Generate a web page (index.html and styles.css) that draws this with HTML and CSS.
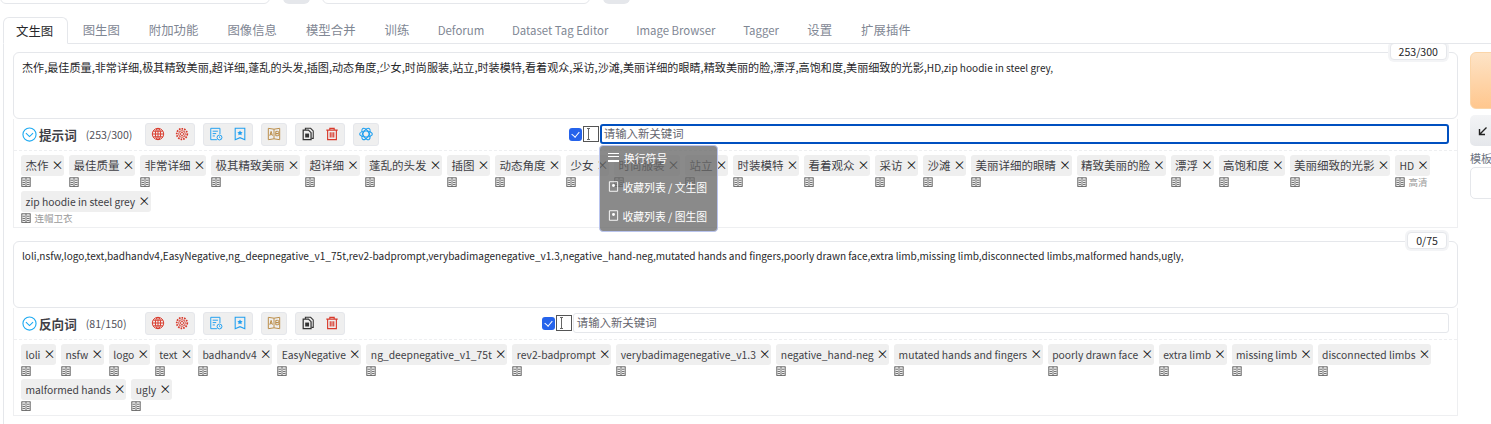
FILE: index.html
```html
<!DOCTYPE html>
<html lang="en">
<head>
  <meta charset="UTF-8" />
  <title>txt2img</title>
  <link rel="stylesheet" href="styles.css">
</head>
<body>
  <svg class="sprites" width="0" height="0">
    <symbol id="i-chevron" viewBox="0 0 16 16"><circle cx="8" cy="8" r="7" fill="none" stroke="currentColor" stroke-width="1.2"/><path d="M4.2 6.5 8 10.2l3.8-3.7" fill="none" stroke="currentColor" stroke-width="1.2"/></symbol>
    <symbol id="i-globe" viewBox="0 0 16 16"><g fill="none" stroke="currentColor" stroke-width="1.1"><circle cx="8" cy="8" r="6.5"/><ellipse cx="8" cy="8" rx="3" ry="6.5"/><path d="M8 1.5v13M1.5 8h13M2.5 4.8h11M2.5 11.2h11"/></g></symbol>
    <symbol id="i-gear" viewBox="0 0 16 16"><g fill="none" stroke="currentColor"><circle cx="8" cy="8" r="6" stroke-width="2" stroke-dasharray="1.8 1.2"/><circle cx="8" cy="8" r="3.8" stroke-width="1"/><circle cx="8" cy="8" r="1.8" stroke-width="1"/></g></symbol>
    <symbol id="i-doc" viewBox="0 0 16 16"><g fill="none" stroke="currentColor" stroke-width="1.1"><path d="M9 14.5H2V1.5h10.5V8"/><path d="M4.2 4.8h6M4.2 7.5h4M4.2 10.2h2.500"/><circle cx="12" cy="12" r="2.800"/><path d="M12 10.800V12l1 .6"/></g></symbol>
    <symbol id="i-mark" viewBox="0 0 16 16"><path d="M2.500 1.500h11v13L8 12.200l-5.500 2.300z" fill="none" stroke="currentColor" stroke-width="1.200"/><path d="m8 4 1 1.800 2 .3-1.400 1.400.3 2L8 8.600l-1.900.9.300-2L5 6.100l2-.3z" fill="currentColor"/></symbol>
    <symbol id="i-book" viewBox="0 0 16 16"><g fill="none" stroke="currentColor" stroke-width="1.100"><path d="M8 2.500 1.500 1.500v13l6.500-1 6.500 1v-13zM8 2.500v11"/><path d="m3.200 10 1.500-5 1.500 5M3.800 8.400h1.800M10 5h2.200a1.200 1.200 0 0 1 0 2.500H10zM10 7.500h2.500a1.200 1.200 0 0 1 0 2.500H10z"/></g></symbol>
    <symbol id="i-copy" viewBox="0 0 16 16"><path d="M5 3.500V1.500h6l3 3v8.500h-2" fill="none" stroke="currentColor" stroke-width="1.200"/><path d="M2.500 3.500h6l3 3v8h-9z" fill="none" stroke="currentColor" stroke-width="1.400"/><rect x="4.800" y="7.500" width="4.400" height="4.500" fill="currentColor"/></symbol>
    <symbol id="i-trash" viewBox="0 0 16 16"><g fill="none" stroke="currentColor" stroke-width="1.300"><path d="M1.500 3.500h13M5.500 3.500V1.500h5v2M3 3.500v11h10v-11M6 6v6M8 6v6M10 6v6"/></g></symbol>
    <symbol id="i-knot" viewBox="0 0 16 16"><g fill="none" stroke="currentColor" stroke-width="1.300"><ellipse cx="8" cy="8" rx="7.200" ry="3.400"/><ellipse cx="8" cy="8" rx="7.200" ry="3.400" transform="rotate(60 8 8)"/><ellipse cx="8" cy="8" rx="7.200" ry="3.400" transform="rotate(120 8 8)"/></g></symbol>
    <symbol id="i-sub" viewBox="0 0 10 10"><g fill="none" stroke="currentColor" stroke-width=".9"><path d="M.5.800h9M.5 9.400h9M.8.800v8.600M9.200.800v8.600M5 .8v8.600M1.500 3.200h2.500M6 3.200h2.500M1.500 5.400h2.500M6 5.400h2.500M1.500 7.400h2.500M6 7.400h2.500"/></g></symbol>
    <symbol id="i-star-box" viewBox="0 0 12 12"><path d="M1.500.8h9v10.400h-9z" fill="none" stroke="currentColor"/><circle cx="6" cy="5" r="1.600" fill="currentColor"/></symbol>
  </svg>

  <div class="top-stub">
    <span class="stub-input stub-a"></span><span class="stub-btn"></span>
    <span class="stub-input stub-b"></span><span class="stub-btn"></span>
  </div>

  <div class="tabs">
    <span class="tab active">文生图</span>
    <span class="tab">图生图</span>
    <span class="tab">附加功能</span>
    <span class="tab">图像信息</span>
    <span class="tab">模型合并</span>
    <span class="tab">训练</span>
    <span class="tab latin">Deforum</span>
    <span class="tab latin">Dataset Tag Editor</span>
    <span class="tab latin">Image Browser</span>
    <span class="tab latin">Tagger</span>
    <span class="tab">设置</span>
    <span class="tab">扩展插件</span>
  </div>

  <div class="tab-panel">
    <div class="main">
      <div class="prompt-box">
        <span class="counter">253/300</span>
        <div class="prompt-text">杰作,最佳质量,非常详细,极其精致美丽,超详细,蓬乱的头发,插图,动态角度,少女,时尚服装,站立,时装模特,看着观众,采访,沙滩,美丽详细的眼睛,精致美丽的脸,漂浮,高饱和度,美丽细致的光影,<span class="latin-text">HD,zip hoodie in steel grey,</span></div>
      </div>
      <div class="tools">
        <div class="tool-row">
          <svg class="title-icon"><use href="#i-chevron"/></svg>
          <span class="title">提示词</span>
          <span class="count">(253/300)</span>
          <div class="group"><svg class="red"><use href="#i-globe"/></svg><svg class="red"><use href="#i-gear"/></svg></div>
          <div class="group"><svg class="blue"><use href="#i-doc"/></svg><svg class="blue"><use href="#i-mark"/></svg></div>
          <div class="group"><svg class="tan"><use href="#i-book"/></svg></div>
          <div class="group"><svg class="dark"><use href="#i-copy"/></svg><svg class="red"><use href="#i-trash"/></svg></div>
          <div class="group"><svg class="blue"><use href="#i-knot"/></svg></div>
          <div class="new-tag first">
            <span class="check"></span>
            <span class="cursor-box"></span>
            <span class="new-input focused">请输入新关键词</span>
          </div>
        </div>
        <div class="chips">
          <div class="item"><span class="chip">杰作<i>×</i></span><svg class="sub"><use href="#i-sub"/></svg></div>
          <div class="item"><span class="chip">最佳质量<i>×</i></span><svg class="sub"><use href="#i-sub"/></svg></div>
          <div class="item"><span class="chip">非常详细<i>×</i></span><svg class="sub"><use href="#i-sub"/></svg></div>
          <div class="item"><span class="chip">极其精致美丽<i>×</i></span><svg class="sub"><use href="#i-sub"/></svg></div>
          <div class="item"><span class="chip">超详细<i>×</i></span><svg class="sub"><use href="#i-sub"/></svg></div>
          <div class="item"><span class="chip">蓬乱的头发<i>×</i></span><svg class="sub"><use href="#i-sub"/></svg></div>
          <div class="item"><span class="chip">插图<i>×</i></span><svg class="sub"><use href="#i-sub"/></svg></div>
          <div class="item"><span class="chip">动态角度<i>×</i></span><svg class="sub"><use href="#i-sub"/></svg></div>
          <div class="item"><span class="chip">少女<i>×</i></span><svg class="sub"><use href="#i-sub"/></svg></div>
          <div class="item"><span class="chip">时尚服装<i>×</i></span><svg class="sub"><use href="#i-sub"/></svg></div>
          <div class="item"><span class="chip">站立<i>×</i></span><svg class="sub"><use href="#i-sub"/></svg></div>
          <div class="item"><span class="chip">时装模特<i>×</i></span><svg class="sub"><use href="#i-sub"/></svg></div>
          <div class="item"><span class="chip">看着观众<i>×</i></span><svg class="sub"><use href="#i-sub"/></svg></div>
          <div class="item"><span class="chip">采访<i>×</i></span><svg class="sub"><use href="#i-sub"/></svg></div>
          <div class="item"><span class="chip">沙滩<i>×</i></span><svg class="sub"><use href="#i-sub"/></svg></div>
          <div class="item"><span class="chip">美丽详细的眼睛<i>×</i></span><svg class="sub"><use href="#i-sub"/></svg></div>
          <div class="item"><span class="chip">精致美丽的脸<i>×</i></span><svg class="sub"><use href="#i-sub"/></svg></div>
          <div class="item"><span class="chip">漂浮<i>×</i></span><svg class="sub"><use href="#i-sub"/></svg></div>
          <div class="item"><span class="chip">高饱和度<i>×</i></span><svg class="sub"><use href="#i-sub"/></svg></div>
          <div class="item"><span class="chip">美丽细致的光影<i>×</i></span><svg class="sub"><use href="#i-sub"/></svg></div>
          <div class="item"><span class="chip latin">HD<i>×</i></span><div class="sub-row"><svg class="sub"><use href="#i-sub"/></svg><span class="trans">高清</span></div></div>
          <div class="item"><span class="chip latin">zip hoodie in steel grey<i>×</i></span><div class="sub-row"><svg class="sub"><use href="#i-sub"/></svg><span class="trans">连帽卫衣</span></div></div>
        </div>
      </div>

      <div class="prompt-box second">
        <span class="counter">0/75</span>
        <div class="prompt-text latin-text">loli,nsfw,logo,text,badhandv4,EasyNegative,ng_deepnegative_v1_75t,rev2-badprompt,verybadimagenegative_v1.3,negative_hand-neg,mutated hands and fingers,poorly drawn face,extra limb,missing limb,disconnected limbs,malformed hands,ugly,</div>
      </div>
      <div class="tools">
        <div class="tool-row">
          <svg class="title-icon"><use href="#i-chevron"/></svg>
          <span class="title">反向词</span>
          <span class="count">(81/150)</span>
          <div class="group"><svg class="red"><use href="#i-globe"/></svg><svg class="red"><use href="#i-gear"/></svg></div>
          <div class="group"><svg class="blue"><use href="#i-doc"/></svg><svg class="blue"><use href="#i-mark"/></svg></div>
          <div class="group"><svg class="tan"><use href="#i-book"/></svg></div>
          <div class="group"><svg class="dark"><use href="#i-copy"/></svg><svg class="red"><use href="#i-trash"/></svg></div>
          <div class="new-tag second-tag">
            <span class="check"></span>
            <span class="cursor-box"></span>
            <span class="new-input">请输入新关键词</span>
          </div>
        </div>
        <div class="chips latin-chips">
          <div class="item"><span class="chip">loli<i>×</i></span><svg class="sub"><use href="#i-sub"/></svg></div>
          <div class="item"><span class="chip">nsfw<i>×</i></span><svg class="sub"><use href="#i-sub"/></svg></div>
          <div class="item"><span class="chip">logo<i>×</i></span><svg class="sub"><use href="#i-sub"/></svg></div>
          <div class="item"><span class="chip">text<i>×</i></span><svg class="sub"><use href="#i-sub"/></svg></div>
          <div class="item"><span class="chip">badhandv4<i>×</i></span><svg class="sub"><use href="#i-sub"/></svg></div>
          <div class="item"><span class="chip">EasyNegative<i>×</i></span><svg class="sub"><use href="#i-sub"/></svg></div>
          <div class="item"><span class="chip">ng_deepnegative_v1_75t<i>×</i></span><svg class="sub"><use href="#i-sub"/></svg></div>
          <div class="item"><span class="chip">rev2-badprompt<i>×</i></span><svg class="sub"><use href="#i-sub"/></svg></div>
          <div class="item"><span class="chip">verybadimagenegative_v1.3<i>×</i></span><svg class="sub"><use href="#i-sub"/></svg></div>
          <div class="item"><span class="chip">negative_hand-neg<i>×</i></span><svg class="sub"><use href="#i-sub"/></svg></div>
          <div class="item"><span class="chip">mutated hands and fingers<i>×</i></span><svg class="sub"><use href="#i-sub"/></svg></div>
          <div class="item"><span class="chip">poorly drawn face<i>×</i></span><svg class="sub"><use href="#i-sub"/></svg></div>
          <div class="item"><span class="chip">extra limb<i>×</i></span><svg class="sub"><use href="#i-sub"/></svg></div>
          <div class="item"><span class="chip">missing limb<i>×</i></span><svg class="sub"><use href="#i-sub"/></svg></div>
          <div class="item"><span class="chip">disconnected limbs<i>×</i></span><svg class="sub"><use href="#i-sub"/></svg></div>
          <div class="item"><span class="chip">malformed hands<i>×</i></span><svg class="sub"><use href="#i-sub"/></svg></div>
          <div class="item"><span class="chip">ugly<i>×</i></span><svg class="sub"><use href="#i-sub"/></svg></div>
        </div>
      </div>
    </div>

    <div class="side">
      <div class="generate"></div>
      <div class="arrow-btn">
        <svg width="12" height="12" viewBox="0 0 12 12"><path d="M9.500 2.500 2.500 9.500M2.500 4v5.500H8" fill="none" stroke="#222" stroke-width="1.400"/></svg>
      </div>
      <div class="side-label">模板</div>
      <div class="side-input"></div>
    </div>

    <div class="menu">
      <div class="menu-item wrap"><span class="lines"></span>换行符号</div>
      <div class="menu-item"><svg><use href="#i-star-box"/></svg>收藏列表 / 文生图</div>
      <div class="menu-item"><svg><use href="#i-star-box"/></svg>收藏列表 / 图生图</div>
    </div>
  </div>
</body>
</html>
```

FILE: styles.css
```css
* {
  box-sizing: border-box;
}
html, body {
  height: 100%;
}
body {
  margin: 0;
  overflow: hidden;
  background-color: #fff;
  color: #27272a;
  font-family: "Noto Sans CJK SC", "Noto Sans", sans-serif;
  font-size: 11px;
}
.sprites {
  position: absolute;
}
.top-stub {
  display: flex;
  height: 4px;
  overflow: hidden;
}
.stub-input {
  display: block;
  height: 14px;
  margin-top: -10px;
  border: 1px solid #e5e7eb;
  border-radius: 6px;
}
.stub-a {
  width: 270px;
}
.stub-b {
  width: 268px;
}
.stub-btn {
  display: block;
  width: 27px;
  height: 14px;
  margin: -10px 12px 0 13px;
  border-radius: 6px;
  background-color: #e5e7eb;
}
.tabs {
  display: flex;
  height: 40px;
  margin-left: 3px;
  padding-top: 13px;
  border-bottom: 1px solid #e5e7eb;
}
.tab {
  height: 27px;
  padding: 0 14.500px;
  color: #7f8794;
  font-size: 12.400px;
  line-height: 26px;
  white-space: nowrap;
}
.tab.latin {
  padding: 0 13.900px;
  font-size: 11.400px;
}
.tab.active {
  padding: 0 14px 0 12px;
  border: 1px solid #e5e7eb;
  border-bottom: 1px solid #fff;
  border-radius: 6px 6px 0 0;
  background-color: #fff;
  color: #27272a;
}
.tab-panel {
  position: relative;
  display: flex;
  height: 380px;
  margin-left: 3px;
  padding: 8px 0 0 9px;
  border-left: 1px solid #e5e7eb;
  overflow: hidden;
}
.main {
  flex: none;
  width: 1445px;
}
.prompt-box {
  position: relative;
  height: 66.500px;
  border: 1px solid #e5e7eb;
  border-radius: 6px;
  background-color: #fff;
}
.prompt-box.second {
  margin-top: 13px;
}
.prompt-text {
  padding: 6px 8px;
  font-size: 11.100px;
  line-height: 16px;
  white-space: nowrap;
}
.latin-text {
  font-size: 10.050px;
}
.counter {
  position: absolute;
  top: -10px;
  right: 10px;
  padding: 0 8px;
  border: 1px solid #e5e7eb;
  border-radius: 4px;
  background-color: #fff;
  box-shadow: 0 0 0 2px #f3f4f6;
  font-size: 10.600px;
  line-height: 15px;
}
.tools {
  border: 1px solid #eeeff1;
  border-top: 0;
}
.tool-row {
  display: flex;
  align-items: center;
  height: 32px;
  padding-left: 8px;
  border-bottom: 1px dashed #eeeff1;
}
.title-icon {
  flex: none;
  width: 15px;
  height: 15px;
  color: #1eaaf1;
}
.title {
  margin-left: 2px;
  font-size: 12.600px;
  font-weight: 700;
  color: #3f3f46;
}
.count {
  width: 59px;
  margin-left: 9px;
  font-size: 10.600px;
  color: #52525b;
}
.group {
  display: flex;
  align-items: center;
  gap: 10px;
  height: 23px;
  margin-right: 8px;
  padding: 0 5px;
  border: 1px solid #e5e7eb;
  border-radius: 3px;
  background-color: #efefef;
}
.group svg {
  width: 14px;
  height: 14px;
}
.red { color: #d8392b; }
.blue { color: #1e9ff0; }
.tan { color: #b98a45; }
.dark { color: #333; }
.new-tag {
  display: flex;
  align-items: center;
  flex: 1;
  height: 20px;
  margin-right: 8px;
}
.new-tag.first {
  margin-left: 182px;
}
.new-tag.second-tag {
  margin-left: 189px;
}
.check {
  position: relative;
  flex: none;
  width: 13px;
  height: 13px;
  border-radius: 3px;
  background-color: #2563eb;
}
.check::after {
  content: "";
  position: absolute;
  left: 4px;
  top: 2.500px;
  width: 4px;
  height: 6px;
  border: solid #fff;
  border-width: 0 1.500px 1.500px 0;
  transform: rotate(40deg);
}
.cursor-box {
  flex: none;
  width: 16px;
  height: 16px;
  margin-left: 1px;
  border: 1px solid #555;
  background:
    linear-gradient(#666, #666) 4px 1px / 1px 12px no-repeat,
    linear-gradient(#666, #666) 3px 1px / 3px 1px no-repeat,
    linear-gradient(#666, #666) 3px 12px / 3px 1px no-repeat;
}
.new-input {
  flex: 1;
  height: 20px;
  margin-left: 1px;
  padding-left: 3px;
  border: 1px solid #e5e7eb;
  border-radius: 3px;
  color: #66666e;
  font-size: 11.400px;
  line-height: 17px;
}
.new-input.focused {
  padding-left: 2px;
  border: 2px solid #0050c0;
  line-height: 15px;
}
.chips {
  display: flex;
  flex-wrap: wrap;
  gap: 3px 5px;
  padding: 4.500px 8px 3px 7px;
}
.latin-chips {
  row-gap: 2px;
}
.item {
  display: flex;
  flex-direction: column;
  align-items: flex-start;
}
.chip {
  display: flex;
  align-items: center;
  height: 21px;
  padding: 0 4.500px 1px;
  border-radius: 3px;
  background-color: #efefef;
  color: #3f3f46;
  font-size: 11.500px;
  white-space: nowrap;
}
.chip.latin,
.latin-chips .chip {
  font-size: 10.320px;
}
.chip i {
  width: 8px;
  margin-left: 3px;
  color: #111;
  font-style: normal;
  font-size: 12px;
  line-height: 1;
}
.sub-row {
  display: flex;
  align-items: center;
  gap: 3.500px;
}
.sub {
  display: block;
  width: 10px;
  height: 10px;
  margin: 1px 0;
  color: #555;
}
.trans {
  color: #9a9a9a;
  font-size: 9.500px;
  line-height: 12px;
}
.side {
  flex: none;
  width: 120px;
  margin-left: 12px;
}
.generate {
  height: 57px;
  border: 1px solid #fbd5a8;
  border-radius: 6px;
  background: linear-gradient(#fde3c6, #ffc78e);
}
.arrow-btn {
  display: flex;
  align-items: center;
  height: 31px;
  margin-top: 6px;
  padding-left: 7px;
  border-radius: 5px;
  background: linear-gradient(#f3f4f6, #e5e7eb);
}
.side-label {
  margin-top: 3.500px;
  color: #6b7280;
  font-size: 11px;
  line-height: 16px;
}
.side-input {
  height: 32px;
  margin-top: 1px;
  border: 1px solid #e5e7eb;
  border-radius: 5px;
}
.menu {
  position: absolute;
  left: 595px;
  top: 101px;
  display: flex;
  flex-direction: column;
  gap: 6px;
  width: 119px;
  height: 87px;
  border: 1px solid #b9c4ee;
  border-radius: 4px;
  background-color: rgba(105, 105, 105, 0.78);
  color: #fff;
  font-size: 10.800px;
}
.menu-item {
  display: flex;
  align-items: center;
  gap: 3.500px;
  height: 23px;
  padding-left: 8px;
  white-space: nowrap;
}
.menu-item svg {
  width: 11px;
  height: 11px;
}
.menu-item.wrap {
  gap: 5px;
}
.lines {
  width: 11px;
  height: 9px;
  border-top: 1px solid #fff;
  border-bottom: 2px solid #fff;
  background: linear-gradient(#fff, #fff) 0 1.500px / 100% 1px no-repeat;
}
```
